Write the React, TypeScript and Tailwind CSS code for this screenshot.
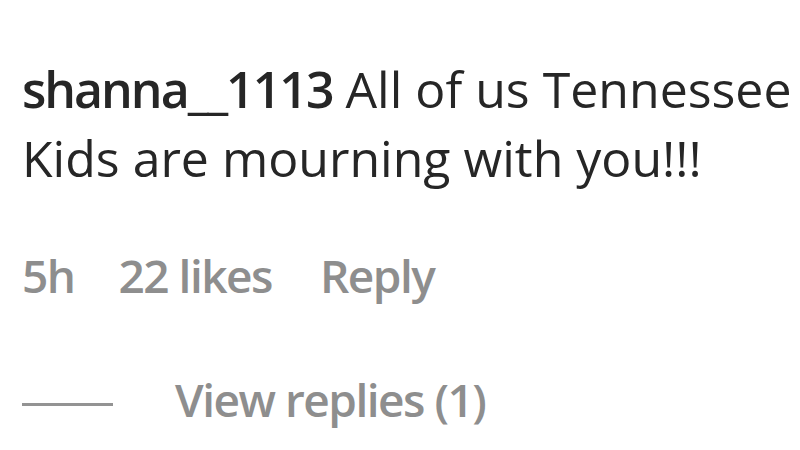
import React from "react";

export default function App() {
  return (
    <div className="w-[800px] h-[450px] bg-white overflow-hidden pl-[22px] pt-[55px]" style={{ fontFamily: '"Open Sans", "Noto Sans", sans-serif' }}>
      <p className="w-[778px] text-[50px] leading-[69px] text-[#262626] tracking-[0px]">
        <span className="font-semibold tracking-[-2px]">shanna__1113</span> All of us Tennessee Kids are mourning with you!!!
      </p>
      <div className="mt-[54px] flex items-center text-[46px] leading-[56px] text-[#8e8e8e] font-semibold tracking-[-1.5px]">
        <span>5h</span>
        <span className="ml-[44px]">22 likes</span>
        <span className="ml-[48px]">Reply</span>
      </div>
      <div className="mt-[68px] flex items-center">
        <div className="w-[91px] h-[3px] mt-[10px] bg-[#939393]"></div>
        <span className="ml-[62px] text-[46px] leading-[56px] text-[#8e8e8e] font-semibold tracking-[-1.5px]">View replies (1)</span>
      </div>
    </div>
  );
}
